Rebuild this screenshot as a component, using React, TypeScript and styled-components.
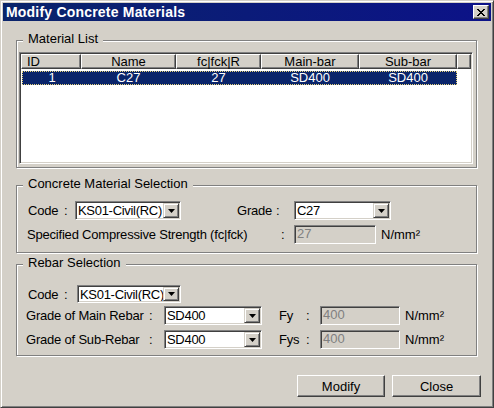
import React from "react";
import styled, { createGlobalStyle } from "styled-components";

const GlobalStyle = createGlobalStyle`
  html, body {
    margin: 0;
    padding: 0;
    background: #d4d0c8;
  }
  body {
    font-family: "Liberation Sans", Arial, sans-serif;
    font-size: 13px;
    color: #000;
  }
`;

const Window = styled.div`
  width: 494px;
  height: 408px;
  box-sizing: border-box;
  background: #d4d0c8;
  border: 1px solid;
  border-color: #d4d0c8 #404040 #404040 #d4d0c8;
  box-shadow: inset 1px 1px 0 #fff, inset -1px -1px 0 #808080;
  padding: 2px;
  display: flex;
  flex-direction: column;
`;

const TitleBar = styled.div`
  height: 18px;
  flex-shrink: 0;
  display: flex;
  align-items: center;
  justify-content: space-between;
  padding: 0 2px 0 3px;
  background: linear-gradient(90deg, #0a246a, #0c1288);
  color: #fff;
  font-weight: bold;
  font-size: 14px;
  letter-spacing: 0.2px;
`;

const CloseBox = styled.div`
  width: 16px;
  height: 14px;
  box-sizing: border-box;
  background: #d4d0c8;
  border: 1px solid;
  border-color: #fff #404040 #404040 #fff;
  box-shadow: inset -1px -1px 0 #808080;
  display: flex;
  align-items: center;
  justify-content: center;
`;

const Content = styled.div`
  padding-left: 13px;
`;

const Group = styled.div<{ $h: number; $mt: number; $pt: number }>`
  position: relative;
  width: 461px;
  height: ${({ $h }) => $h}px;
  margin-top: ${({ $mt }) => $mt}px;
  box-sizing: border-box;
  border: 1px solid #808080;
  box-shadow: inset 1px 1px 0 #fff, 1px 1px 0 #fff;
  padding: ${({ $pt }) => $pt}px 0 0 2px;
`;

const Legend = styled.span`
  position: absolute;
  top: -10px;
  left: 6px;
  padding: 0 5px;
  line-height: 15px;
  background: #d4d0c8;
`;

const ListBox = styled.div`
  width: 454px;
  height: 112px;
  box-sizing: border-box;
  background: #fff;
  border: 1px solid;
  border-color: #808080 #fff #fff #808080;
  box-shadow: inset 1px 1px 0 #404040, inset -1px -1px 0 #d4d0c8;
  padding: 1px;
  overflow: hidden;
`;

const HeaderRow = styled.div`
  display: flex;
  height: 15px;
`;

const HeaderCell = styled.div<{ $w: number; $left?: boolean }>`
  width: ${({ $w }) => $w}px;
  flex-shrink: 0;
  box-sizing: border-box;
  background: #d4d0c8;
  border: 1px solid;
  border-color: #fff #404040 #404040 #fff;
  box-shadow: inset -1px -1px 0 #808080;
  line-height: 13px;
  text-align: ${({ $left }) => ($left ? "left" : "center")};
  padding-left: ${({ $left }) => ($left ? "5px" : "0")};
  white-space: nowrap;
`;

const FillerCell = styled(HeaderCell)`
  flex: 1;
`;

const SelectedRow = styled.div`
  display: flex;
  width: 435px;
  height: 14px;
  margin: 2px 0 0 1px;
  box-sizing: border-box;
  background: #0a246a;
  border: 1px dotted #e6d27a;
  color: #fff;
`;

const Cell = styled.div<{ $w: number }>`
  width: ${({ $w }) => $w}px;
  flex-shrink: 0;
  text-align: center;
  line-height: 12px;
  white-space: nowrap;
`;

const FormRow = styled.div<{ $mt?: number; $pl: number }>`
  display: flex;
  align-items: center;
  margin-top: ${({ $mt }) => $mt ?? 0}px;
  padding-left: ${({ $pl }) => $pl}px;
`;

const Label = styled.span<{ $w: number; $colon: number; $ml?: number }>`
  position: relative;
  width: ${({ $w }) => $w}px;
  margin-left: ${({ $ml }) => $ml ?? 0}px;
  flex-shrink: 0;
  white-space: nowrap;
  line-height: 15px;
  letter-spacing: -0.2px;

  &::after {
    content: ":";
    position: absolute;
    left: ${({ $colon }) => $colon}px;
  }
`;

const Combo = styled.div<{ $w: number; $h?: number }>`
  width: ${({ $w }) => $w}px;
  height: ${({ $h }) => $h ?? 19}px;
  flex-shrink: 0;
  box-sizing: border-box;
  display: flex;
  background: #fff;
  border: 1px solid;
  border-color: #808080 #fff #fff #808080;
  box-shadow: inset 1px 1px 0 #404040, inset -1px -1px 0 #d4d0c8;
  padding: 1px;
`;

const ComboText = styled.span`
  flex: 1;
  min-width: 0;
  padding-left: 1px;
  line-height: 15px;
  letter-spacing: -0.3px;
  white-space: nowrap;
  overflow: hidden;
`;

const DropButton = styled.span`
  width: 16px;
  flex-shrink: 0;
  box-sizing: border-box;
  background: #d4d0c8;
  border: 1px solid;
  border-color: #d4d0c8 #404040 #404040 #d4d0c8;
  box-shadow: inset 1px 1px 0 #fff, inset -1px -1px 0 #808080;
  display: flex;
  align-items: center;
  justify-content: center;
`;

const Edit = styled.div<{ $w: number; $h?: number }>`
  width: ${({ $w }) => $w}px;
  height: ${({ $h }) => $h ?? 19}px;
  flex-shrink: 0;
  box-sizing: border-box;
  background: #d4d0c8;
  color: #808080;
  border: 1px solid;
  border-color: #808080 #fff #fff #808080;
  box-shadow: inset 1px 1px 0 #404040, inset -1px -1px 0 #d4d0c8;
  padding: 1px 2px;
  line-height: 14px;
`;

const Unit = styled.span<{ $ml: number }>`
  margin-left: ${({ $ml }) => $ml}px;
  white-space: nowrap;
`;

const ButtonRow = styled.div`
  width: 465px;
  margin-top: 19px;
  display: flex;
  justify-content: flex-end;
  gap: 7px;
`;

const Button = styled.button<{ $w: number }>`
  width: ${({ $w }) => $w}px;
  height: 22px;
  box-sizing: border-box;
  margin: 0;
  padding: 0;
  font: inherit;
  color: #000;
  background: #d4d0c8;
  border: 1px solid;
  border-color: #fff #404040 #404040 #fff;
  box-shadow: inset -1px -1px 0 #808080, inset 1px 1px 0 #d4d0c8;
`;

const Arrow = () => (
  <svg width="7" height="4" viewBox="0 0 7 4">
    <path d="M0 0h7L3.5 4z" fill="#000" />
  </svg>
);

const ComboBox = ({ w, value, h }: { w: number; value: string; h?: number }) => (
  <Combo $w={w} $h={h}>
    <ComboText>{value}</ComboText>
    <DropButton>
      <Arrow />
    </DropButton>
  </Combo>
);

const columns = [
  { key: "id", title: "ID", w: 60, value: "1" },
  { key: "name", title: "Name", w: 95, value: "C27" },
  { key: "fc", title: "fc|fck|R", w: 85, value: "27" },
  { key: "main", title: "Main-bar", w: 98, value: "SD400" },
  { key: "sub", title: "Sub-bar", w: 98, value: "SD400" },
];

export default function App() {
  return (
    <>
      <GlobalStyle />
      <Window>
        <TitleBar>
          <span>Modify Concrete Materials</span>
          <CloseBox>
            <svg width="8" height="7" viewBox="0 0 8 7" shapeRendering="crispEdges">
              <path
                d="M0 0h2v1h1v1h2V1h1V0h2v1H7v1H6v1H5v1h1v1h1v1h1v1H6V6H5V5H3v1H2v1H0V6h1V5h1V4h1V3H2V2H1V1H0z"
                fill="#000"
              />
            </svg>
          </CloseBox>
        </TitleBar>

        <Content>
          <Group $h={128} $mt={19} $pt={11}>
            <Legend>Material List</Legend>
            <ListBox>
              <HeaderRow>
                {columns.map((c, i) => (
                  <HeaderCell key={c.key} $w={c.w} $left={i === 0}>
                    {c.title}
                  </HeaderCell>
                ))}
                <FillerCell $w={0} />
              </HeaderRow>
              <SelectedRow>
                {columns.map((c, i) => (
                  <Cell key={c.key} $w={i === 0 ? c.w - 2 : c.w}>
                    {c.value}
                  </Cell>
                ))}
              </SelectedRow>
            </ListBox>
          </Group>

          <Group $h={68} $mt={17} $pt={15}>
            <Legend>Concrete Material Selection</Legend>
            <FormRow $pl={9}>
              <Label $w={47} $colon={36}>Code</Label>
              <ComboBox w={106} value="KS01-Civil(RC)" />
              <Label $w={57} $colon={39} $ml={56}>
                Grade
              </Label>
              <ComboBox w={97} value="C27" />
            </FormRow>
            <FormRow $mt={5} $pl={8}>
              <Label $w={267} $colon={254}>
                Specified Compressive Strength (fc|fck)
              </Label>
              <Edit $w={82}>27</Edit>
              <Unit $ml={5}>N/mm²</Unit>
            </FormRow>
          </Group>

          <Group $h={92} $mt={11} $pt={20}>
            <Legend>Rebar Selection</Legend>
            <FormRow $pl={9}>
              <Label $w={49} $colon={36}>Code</Label>
              <ComboBox w={104} value="KS01-Civil(RC)" h={18} />
            </FormRow>
            <FormRow $mt={3} $pl={7}>
              <Label $w={138} $colon={123}>Grade of Main Rebar</Label>
              <ComboBox w={98} value="SD400" />
              <Label $w={41} $colon={27} $ml={17}>
                Fy
              </Label>
              <Edit $w={80}>400</Edit>
              <Unit $ml={5}>N/mm²</Unit>
            </FormRow>
            <FormRow $mt={5} $pl={7}>
              <Label $w={138} $colon={123}>Grade of Sub-Rebar</Label>
              <ComboBox w={98} value="SD400" />
              <Label $w={41} $colon={27} $ml={17}>
                Fys
              </Label>
              <Edit $w={80}>400</Edit>
              <Unit $ml={5}>N/mm²</Unit>
            </FormRow>
          </Group>

          <ButtonRow>
            <Button $w={88}>Modify</Button>
            <Button $w={89}>Close</Button>
          </ButtonRow>
        </Content>
      </Window>
    </>
  );
}
